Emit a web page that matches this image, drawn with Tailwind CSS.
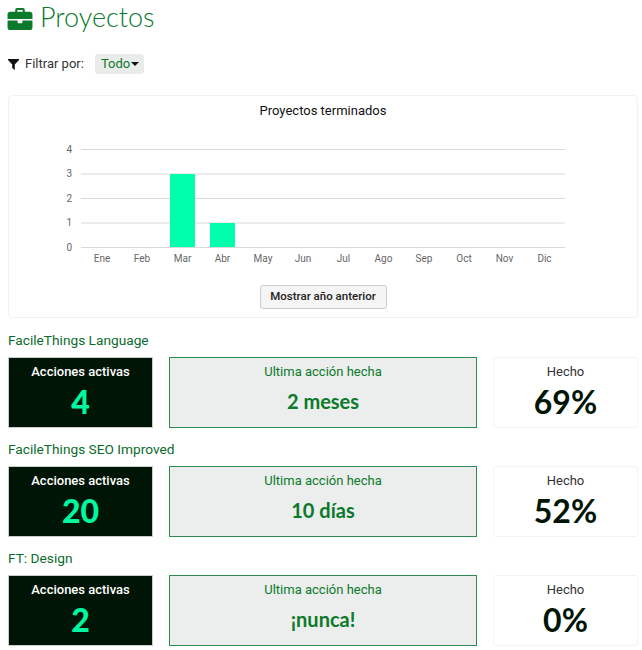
<!DOCTYPE html>
<html lang="es">
<head>
<meta charset="UTF-8">
<title>Proyectos</title>
<script src="https://cdn.jsdelivr.net/npm/@tailwindcss/browser@4"></script>
</head>
<body class="bg-white font-['Roboto','Open_Sans',sans-serif] w-[642px] h-[650px] overflow-hidden">
<main class="pl-2 pr-1">
  <header class="flex items-center h-[36px] gap-[7px] -ml-[1px]">
    <svg class="w-[26px] h-[23px] text-[#0b7a2b]" viewBox="0 0 26 24" fill="currentColor"><path d="M8 5V3a2 2 0 0 1 2-2h6a2 2 0 0 1 2 2v2h5a3 3 0 0 1 3 3v4.500H0V8a3 3 0 0 1 3-3zm2.200 0h5.600V3.200h-5.600z"/><path d="M0 14h10.500v2a1 1 0 0 0 1 1h3a1 1 0 0 0 1-1v-2H26v7a3 3 0 0 1-3 3H3a3 3 0 0 1-3-3z"/></svg>
    <h1 class="-mt-[3px] text-[27px] leading-none text-[#0b7a2b] font-light font-['Lato']">Proyectos</h1>
  </header>
  <div class="flex items-center h-[24px] mt-[16px] text-[13px] text-[#333]">
    <svg class="w-[11px] h-[11px] text-[#111]" viewBox="0 0 12 12" fill="currentColor"><path d="M0 0h12v1.200L7.400 6v6L4.600 9.800V6L0 1.200z"/></svg>
    <span class="ml-[6px]">Filtrar por:</span>
    <span class="ml-[11px] flex items-center h-[20px] pl-[6px] pr-[5px] rounded-[3px] bg-[#eaecea] text-[#0b7a2b]">Todo<span class="ml-[1px] border-x-[4px] border-x-transparent border-t-[4px] border-t-[#111]"></span></span>
  </div>

  <section class="mt-[19px] h-[223px] w-[630px] rounded-[4px] border border-[#f1f1f1] flex flex-col items-center">
    <h2 class="mt-[5px] text-[13px] leading-[20px] text-[#111] font-normal">Proyectos terminados</h2>
    <svg class="mt-[4px] self-start" width="628" height="140" viewBox="1 0 628 140" font-family="Roboto" font-size="10" fill="#666">
      <g stroke="#d9d9d9" stroke-width="1">
        <line x1="73" x2="557" y1="24.500" y2="24.500"/>
        <line x1="73" x2="557" y1="49" y2="49"/>
        <line x1="73" x2="557" y1="73.500" y2="73.500"/>
        <line x1="73" x2="557" y1="98" y2="98"/>
        <line x1="73" x2="557" y1="122.500" y2="122.500"/>
      </g>
      <rect x="162" y="49" width="25" height="73" fill="#00ffaa"/>
      <rect x="202" y="98" width="25" height="24" fill="#00ffaa"/>
      <g text-anchor="end">
        <text x="64" y="28">4</text>
        <text x="64" y="52">3</text>
        <text x="64" y="77">2</text>
        <text x="64" y="101">1</text>
        <text x="64" y="126">0</text>
      </g>
      <g text-anchor="middle">
        <text x="94" y="137">Ene</text>
        <text x="134" y="137">Feb</text>
        <text x="174.500" y="137">Mar</text>
        <text x="214.500" y="137">Abr</text>
        <text x="255" y="137">May</text>
        <text x="295" y="137">Jun</text>
        <text x="335.500" y="137">Jul</text>
        <text x="375.500" y="137">Ago</text>
        <text x="416" y="137">Sep</text>
        <text x="456" y="137">Oct</text>
        <text x="496.500" y="137">Nov</text>
        <text x="536.500" y="137">Dic</text>
      </g>
    </svg>
    <button class="mt-[20px] h-[24px] w-[127px] rounded-[3px] border border-[#ccc] bg-[#f5f5f5] text-[11.500px] font-medium text-[#222]">Mostrar año anterior</button>
  </section>

  <section class="mt-[11px]">
    <h3 class="text-[13.700px] leading-[22px] text-[#0b6b2c] font-normal">FacileThings Language</h3>
    <div class="mt-[6px] flex h-[71px]">
      <div class="w-[145px] bg-[#001505] flex flex-col items-center border border-[#ccc]">
        <span class="mt-[4px] text-[13px] leading-[20px] font-medium text-white">Acciones activas</span>
        <span class="text-[32px] leading-[40px] font-black font-['Lato'] text-[#00f8a0]">4</span>
      </div>
      <div class="ml-[16px] w-[308px] bg-[#eceded] flex flex-col items-center border border-[#2e8b50]">
        <span class="mt-[4px] text-[13px] leading-[20px] text-[#0b7a2b]">Ultima acción hecha</span>
        <span class="mt-[4px] text-[20px] leading-[30px] font-bold font-['Lato'] text-[#0b7a2b]">2 meses</span>
      </div>
      <div class="ml-[16px] w-[145px] flex flex-col items-center border border-[#f3f3f3] rounded-[3px]">
        <span class="mt-[4px] text-[13px] leading-[20px] text-[#333]">Hecho</span>
        <span class="text-[32px] leading-[40px] font-bold font-['Lato'] text-[#001505]">69%</span>
      </div>
    </div>
  </section>

  <section class="mt-[10px]">
    <h3 class="text-[13.700px] leading-[22px] text-[#0b6b2c] font-normal">FacileThings SEO Improved</h3>
    <div class="mt-[6px] flex h-[71px]">
      <div class="w-[145px] bg-[#001505] flex flex-col items-center border border-[#ccc]">
        <span class="mt-[4px] text-[13px] leading-[20px] font-medium text-white">Acciones activas</span>
        <span class="text-[32px] leading-[40px] font-black font-['Lato'] text-[#00f8a0]">20</span>
      </div>
      <div class="ml-[16px] w-[308px] bg-[#eceded] flex flex-col items-center border border-[#2e8b50]">
        <span class="mt-[4px] text-[13px] leading-[20px] text-[#0b7a2b]">Ultima acción hecha</span>
        <span class="mt-[4px] text-[20px] leading-[30px] font-bold font-['Lato'] text-[#0b7a2b]">10 días</span>
      </div>
      <div class="ml-[16px] w-[145px] flex flex-col items-center border border-[#f3f3f3] rounded-[3px]">
        <span class="mt-[4px] text-[13px] leading-[20px] text-[#333]">Hecho</span>
        <span class="text-[32px] leading-[40px] font-bold font-['Lato'] text-[#001505]">52%</span>
      </div>
    </div>
  </section>

  <section class="mt-[10px]">
    <h3 class="text-[13.700px] leading-[22px] text-[#0b6b2c] font-normal">FT: Design</h3>
    <div class="mt-[6px] flex h-[71px]">
      <div class="w-[145px] bg-[#001505] flex flex-col items-center border border-[#ccc]">
        <span class="mt-[4px] text-[13px] leading-[20px] font-medium text-white">Acciones activas</span>
        <span class="text-[32px] leading-[40px] font-black font-['Lato'] text-[#00f8a0]">2</span>
      </div>
      <div class="ml-[16px] w-[308px] bg-[#eceded] flex flex-col items-center border border-[#2e8b50]">
        <span class="mt-[4px] text-[13px] leading-[20px] text-[#0b7a2b]">Ultima acción hecha</span>
        <span class="mt-[4px] text-[20px] leading-[30px] font-bold font-['Lato'] text-[#0b7a2b]">¡nunca!</span>
      </div>
      <div class="ml-[16px] w-[145px] flex flex-col items-center border border-[#f3f3f3] rounded-[3px]">
        <span class="mt-[4px] text-[13px] leading-[20px] text-[#333]">Hecho</span>
        <span class="text-[32px] leading-[40px] font-bold font-['Lato'] text-[#001505]">0%</span>
      </div>
    </div>
  </section>
</main>
</body>
</html>
